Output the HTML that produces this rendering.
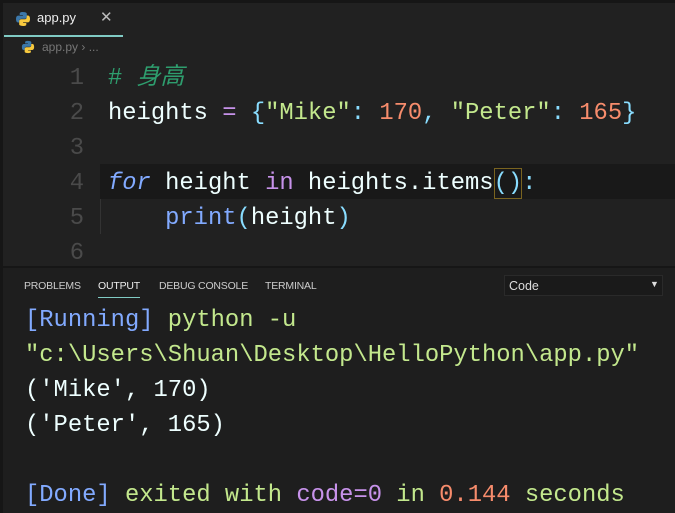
<!DOCTYPE html>
<html><head><meta charset="utf-8"><style>
*{margin:0;padding:0;box-sizing:border-box}
body{width:675px;height:513px;overflow:hidden;background:#212121;position:relative;font-family:"Liberation Sans",sans-serif}
.abs{position:absolute}
.mono{font-family:"Liberation Mono","Noto Sans CJK SC",monospace;font-size:23.8px;line-height:35px}
.mono div{white-space:pre;height:35px}
.ln{position:absolute;left:0;width:84px;text-align:right;color:#4a4a4a}
.code{position:absolute;left:108px}
</style></head><body>
<div class="abs" style="left:0;top:0;width:675px;height:3px;background:#161616"></div>
<div class="abs" style="left:0;top:0;width:3px;height:513px;background:#161616"></div>
<div class="abs" style="left:4px;top:3px;width:119px;height:34px;background:#212121;border-bottom:2px solid #80cbc4"></div>
<svg class="abs" style="left:15px;top:11px" width="16" height="16" viewBox="0 0 16 16"><path d="M7.8 1C4.5 1 4.7 2.4 4.7 2.4V4h3.2v.6H3.4S1 4.3 1 8s2.1 3.5 2.1 3.5h1.2V9.8s-.1-2.1 2.1-2.1h3.4s2 0 2-2V2.8S12.1 1 7.8 1z" fill="#3c78aa"/><path d="M8.2 15c3.3 0 3.1-1.4 3.1-1.4V12H8.1v-.6h4.5S15 11.7 15 8s-2.1-3.5-2.1-3.5h-1.2v1.7s.1 2.1-2.1 2.1H6.2s-2 0-2 2v3S3.9 15 8.2 15z" fill="#f7c93e"/></svg>
<div class="abs" style="left:37px;top:10px;font-size:13px;color:#eeeeee">app.py</div>
<div class="abs" style="left:100px;top:8px;font-size:15px;color:#bbb">✕</div>
<svg class="abs" style="left:21px;top:40px" width="14" height="14" viewBox="0 0 16 16"><path d="M7.8 1C4.5 1 4.7 2.4 4.7 2.4V4h3.2v.6H3.4S1 4.3 1 8s2.1 3.5 2.1 3.5h1.2V9.8s-.1-2.1 2.1-2.1h3.4s2 0 2-2V2.8S12.1 1 7.8 1z" fill="#3c78aa"/><path d="M8.2 15c3.3 0 3.1-1.4 3.1-1.4V12H8.1v-.6h4.5S15 11.7 15 8s-2.1-3.5-2.1-3.5h-1.2v1.7s.1 2.1-2.1 2.1H6.2s-2 0-2 2v3S3.9 15 8.2 15z" fill="#f7c93e"/></svg>
<div class="abs" style="left:42px;top:40px;font-size:12px;color:#777">app.py › ...</div>
<div class="abs" style="left:100px;top:164px;width:575px;height:35px;background:#191919"></div>
<div class="abs" style="left:100px;top:199px;width:1px;height:35px;background:#333"></div>
<div class="abs" style="left:494px;top:168px;width:28px;height:31px;border:1px solid #7a6420"></div>
<div class="mono abs" style="left:0;top:61px;width:675px">
<div class="ln" style="top:0">1</div><div class="code" style="top:0;color:#2e9e6e"># <i>身高</i></div>
<div class="ln" style="top:35px">2</div><div class="code" style="top:35px;color:#eeffff">heights <span style="color:#c792ea">=</span> <span style="color:#89ddff">{</span><span style="color:#c3e88d">"Mike"</span><span style="color:#89ddff">:</span> <span style="color:#f78c6c">170</span><span style="color:#89ddff">,</span> <span style="color:#c3e88d">"Peter"</span><span style="color:#89ddff">:</span> <span style="color:#f78c6c">165</span><span style="color:#89ddff">}</span></div>
<div class="ln" style="top:70px">3</div>
<div class="ln" style="top:105px">4</div><div class="code" style="top:105px;color:#eeffff"><i style="color:#82aaff">for</i> height <span style="color:#c792ea">in</span> heights.items<span style="color:#89ddff">()</span><span style="color:#89ddff">:</span></div>
<div class="ln" style="top:140px">5</div><div class="code" style="top:140px;color:#eeffff">    <span style="color:#82aaff">print</span><span style="color:#89ddff">(</span>height<span style="color:#89ddff">)</span></div>
<div class="ln" style="top:175px">6</div>
</div>
<div class="abs" style="left:3px;top:266px;width:672px;height:247px;background:#1e1e1e;border-top:2px solid #161616"></div>
<div class="abs" style="left:24px;top:280px;font-size:10.5px;color:#ccc;letter-spacing:-0.2px">PROBLEMS</div>
<div class="abs" style="left:98px;top:280px;font-size:10.5px;color:#eee;letter-spacing:-0.2px">OUTPUT</div>
<div class="abs" style="left:98px;top:297px;width:42px;height:1px;background:#80cbc4"></div>
<div class="abs" style="left:159px;top:280px;font-size:10.5px;color:#ccc;letter-spacing:-0.2px">DEBUG CONSOLE</div>
<div class="abs" style="left:265px;top:280px;font-size:10.5px;color:#ccc;letter-spacing:-0.2px">TERMINAL</div>
<div class="abs" style="left:504px;top:275px;width:159px;height:21px;background:#1a1a1a;border:1px solid #2a2a2a"></div>
<div class="abs" style="left:509px;top:279px;font-size:12.5px;color:#ddd">Code</div>
<div class="abs" style="left:650px;top:279px;font-size:9px;color:#ddd">▼</div>
<div class="mono abs" style="left:25px;top:303px"><div style="color:#c3e88d"><span style="color:#82aaff">[Running]</span> python -u</div><div style="color:#c3e88d">"c:\Users\Shuan\Desktop\HelloPython\app.py"</div><div style="color:#eeffff">('Mike', 170)</div><div style="color:#eeffff">('Peter', 165)</div><div> </div><div style="color:#c3e88d"><span style="color:#82aaff">[Done]</span> exited with <span style="color:#c792ea">code=0</span> in <span style="color:#f78c6c">0.144</span> seconds</div></div>
</body></html>
